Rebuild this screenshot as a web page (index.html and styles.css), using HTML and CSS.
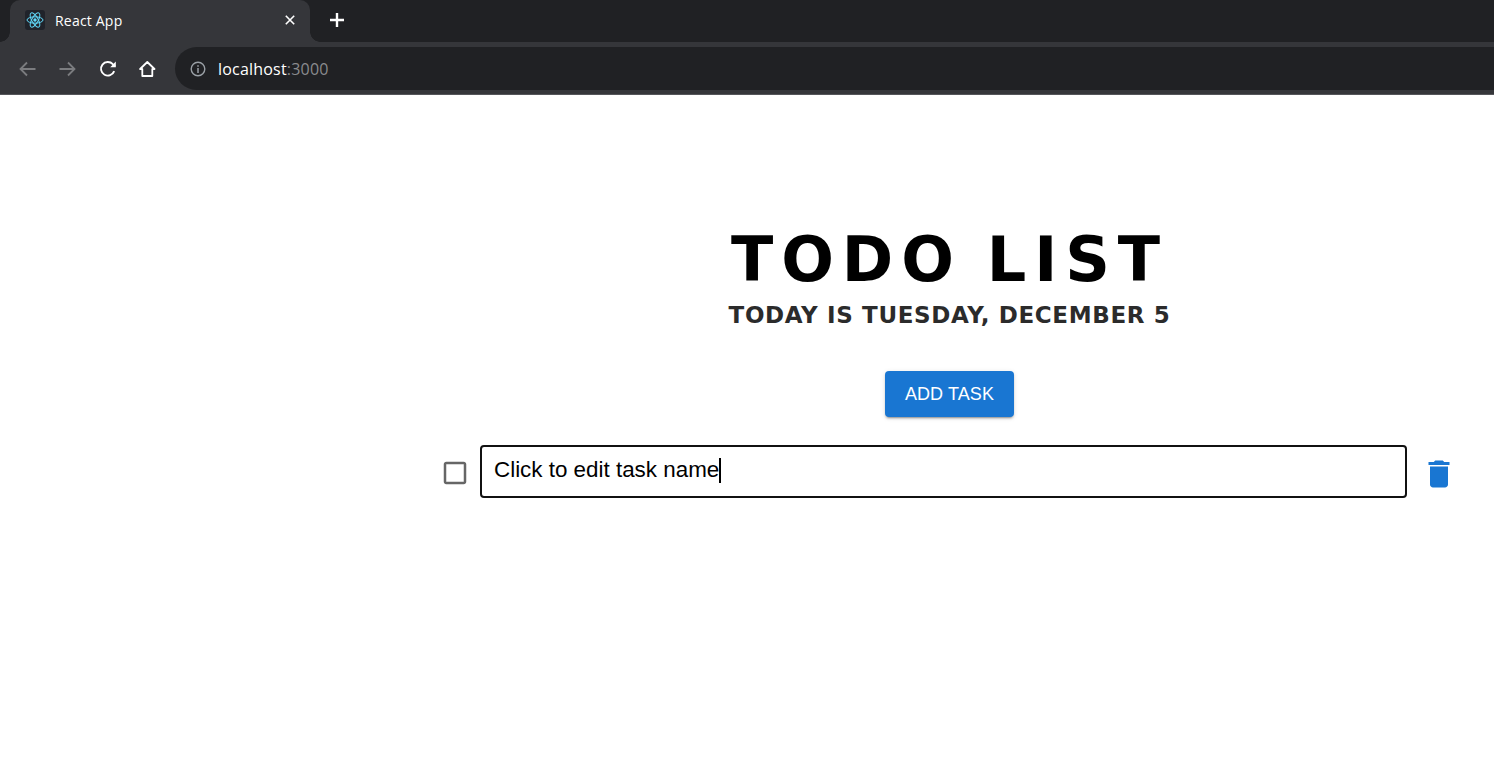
FILE: index.html
```html
<!DOCTYPE html>
<html lang="en">
<head>
    <meta charset="UTF-8">
    <title>React App</title>
    <link rel="stylesheet" href="styles.css">
</head>
<body>
    <div class="tab-strip">
        <div class="tab">
            <svg class="favicon" viewBox="0 0 20 20" width="20" height="20">
                <rect width="20" height="20" rx="3" fill="#20232a"/>
                <g fill="none" stroke="#61dafb" stroke-width="1">
                    <ellipse cx="10" cy="10" rx="8" ry="3.2"/>
                    <ellipse cx="10" cy="10" rx="8" ry="3.2" transform="rotate(60 10 10)"/>
                    <ellipse cx="10" cy="10" rx="8" ry="3.2" transform="rotate(120 10 10)"/>
                </g>
                <circle cx="10" cy="10" r="1.7" fill="#61dafb"/>
            </svg>
            <span class="tab-title">React App</span>
            <svg class="tab-close" viewBox="0 0 10 10" width="10" height="10">
                <path d="M0.8 0.8L9.2 9.2M9.2 0.8L0.8 9.2" stroke="#fff" stroke-width="1.6" fill="none"/>
            </svg>
        </div>
        <svg class="new-tab" viewBox="0 0 16 16" width="16" height="16">
            <path d="M8 1V15M1 8H15" stroke="#fff" stroke-width="2.4" fill="none"/>
        </svg>
    </div>

    <div class="toolbar">
        <div class="nav-buttons">
            <svg viewBox="0 0 20 20" width="20" height="20">
                <path d="M17.500 10H2.500M9 3.500L2.500 10l6.500 6.500" stroke="#7b7c7f" stroke-width="1.8" fill="none"/>
            </svg>
            <svg viewBox="0 0 20 20" width="20" height="20">
                <path d="M1.500 10H16.500M10 3.500L16.500 10l-6.500 6.500" stroke="#7b7c7f" stroke-width="1.8" fill="none"/>
            </svg>
            <svg viewBox="0 0 20 20" width="20" height="20">
                <path d="M16.200 12.200A6.800 6.800 0 1 1 14.800 5.200L17 7.400" stroke="#fff" stroke-width="1.900" fill="none"/>
                <path d="M17.800 2.600V8.200H12.200Z" fill="#fff"/>
            </svg>
            <svg viewBox="0 0 20 20" width="20" height="20">
                <path d="M9.300 3L2.100 10H4.300V17H14.300V10H16.500Z" stroke="#fff" stroke-width="1.800" fill="none" stroke-linejoin="round"/>
            </svg>
        </div>
        <div class="address-bar">
            <svg viewBox="0 0 16 16" width="16" height="16">
                <circle cx="8" cy="8" r="6.800" stroke="#9aa0a6" stroke-width="1.400" fill="none"/>
                <path d="M8 7V12M8 4.200V5.800" stroke="#9aa0a6" stroke-width="1.500" fill="none"/>
            </svg>
            <span class="url">localhost<span class="url-port">:3000</span></span>
        </div>
    </div>

    <div class="page">
        <h1 class="page-title">TODO LIST</h1>
        <h2 class="page-date">TODAY IS TUESDAY, DECEMBER 5</h2>
        <button class="btn-add">ADD TASK</button>

        <div class="task-row">
            <svg class="task-check" viewBox="0 0 24 24" width="30" height="30">
                <path d="M19 5v14H5V5h14m0-2H5c-1.100 0-2 .9-2 2v14c0 1.100.9 2 2 2h14c1.100 0 2-.9 2-2V5c0-1.100-.9-2-2-2z" fill="#666"/>
            </svg>
            <div class="task-input">Click to edit task name<span class="caret"></span></div>
            <svg class="task-delete" viewBox="0 0 24 24" width="36" height="36">
                <path d="M6 19c0 1.100.9 2 2 2h8c1.100 0 2-.9 2-2V7H6v12zM19 4h-3.500l-1-1h-5l-1 1H5v2h14V4z" fill="#1976d2"/>
            </svg>
        </div>
    </div>
</body>
</html>
```

FILE: styles.css
```css
* {
    margin: 0;
    padding: 0;
    box-sizing: border-box;
}

body {
    background-color: #ffffff;
    font-family: "Liberation Sans", Arial, sans-serif;
    overflow: hidden;
}

/* browser chrome */
.tab-strip {
    display: flex;
    align-items: flex-end;
    height: 42px;
    padding-left: 10px;
    background-color: #202124;
}

.tab {
    position: relative;
    display: flex;
    align-items: center;
    width: 300px;
    height: 42px;
    padding: 0 15px 2px;
    background-color: #35363a;
    border-radius: 10px 10px 0 0;
}

.tab::before,
.tab::after {
    content: "";
    position: absolute;
    bottom: 0;
    width: 10px;
    height: 10px;
}

.tab::before {
    left: -10px;
    background: radial-gradient(circle at 0 0, transparent 9.500px, #35363a 10px);
}

.tab::after {
    right: -10px;
    background: radial-gradient(circle at 100% 0, transparent 9.500px, #35363a 10px);
}

.tab-title {
    flex: 1;
    margin-left: 10px;
    color: #ffffff;
    font-family: "Open Sans", sans-serif;
    font-size: 14px;
    letter-spacing: 0.2px;
}

.new-tab {
    margin: 0 0 14px 19px;
}

.toolbar {
    display: flex;
    align-items: flex-start;
    height: 53px;
    padding-top: 5px;
    background-color: #35363a;
    border-bottom: 1px solid #55565a;
}

.nav-buttons {
    display: flex;
    gap: 20px;
    width: 175px;
    padding: 12px 0 0 18px;
}

.address-bar {
    display: flex;
    align-items: center;
    flex: 1;
    height: 43px;
    padding-left: 15px;
    background-color: #202124;
    border-radius: 22px 0 0 22px;
}

.url {
    margin-left: 12px;
    color: #ffffff;
    font-family: "Open Sans", sans-serif;
    font-size: 16px;
    letter-spacing: 0.2px;
}

.url-port {
    color: #8a8b8e;
}

/* todo page */
.page {
    display: flex;
    flex-direction: column;
    align-items: center;
    padding: 127px 35px 0 440px;
}

.page-title {
    color: #000000;
    font-family: "DejaVu Sans", Verdana, sans-serif;
    font-size: 62px;
    font-weight: bold;
    letter-spacing: 7.900px;
    word-spacing: -4.500px;
    line-height: 76px;
    white-space: pre;
}

.page-date {
    margin-top: 3px;
    color: #2b2b2b;
    font-family: "DejaVu Sans", Verdana, sans-serif;
    font-size: 23px;
    font-weight: bold;
    letter-spacing: 0.640px;
    line-height: 28px;
}

.btn-add {
    width: 129px;
    height: 46px;
    margin-top: 42px;
    background-color: #1976d2;
    border: none;
    border-radius: 4px;
    box-shadow: 0 3px 1px -2px rgba(0, 0, 0, 0.2), 0 2px 2px rgba(0, 0, 0, 0.14), 0 1px 5px rgba(0, 0, 0, 0.12);
    color: #ffffff;
    font-family: "Liberation Sans", Arial, sans-serif;
    font-size: 18px;
    letter-spacing: 0.1px;
}

.task-row {
    display: flex;
    align-items: center;
    align-self: stretch;
    margin: 28px 2px 0 0;
}

.task-check {
    flex-shrink: 0;
    margin: 2px 10px 0 0;
}

.task-input {
    flex: 1;
    height: 53px;
    padding-left: 12px;
    border: 2px solid #111111;
    border-radius: 4px;
    color: #000000;
    font-size: 22.400px;
    line-height: 45px;
}

.caret {
    display: inline-block;
    width: 2px;
    height: 25px;
    margin-bottom: -6px;
    background-color: #000000;
}

.task-delete {
    flex-shrink: 0;
    margin: 4px 0 0 14px;
}
```
